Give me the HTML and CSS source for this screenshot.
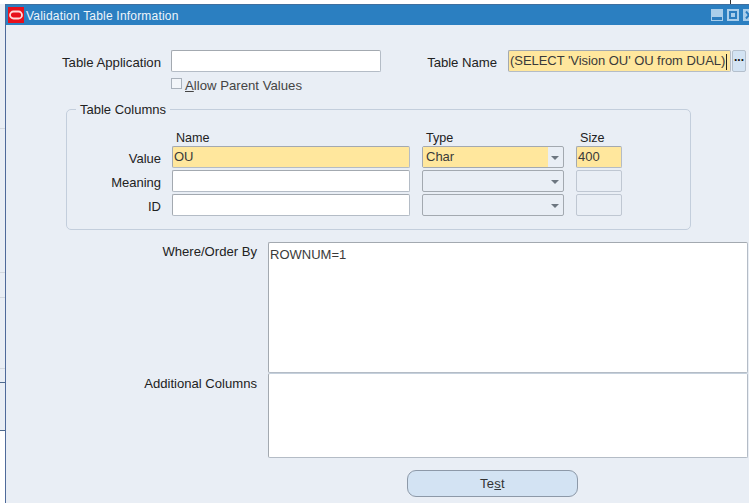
FILE: index.html
```html
<!DOCTYPE html>
<html lang="en">
<head>
  <meta charset="UTF-8">
  <title>Validation Table Information</title>
  <link rel="stylesheet" href="styles.css">
</head>
<body>

  <div class="desktop">
    <div class="desk-line line-1"></div>
    <div class="desk-line line-2"></div>
    <div class="desk-line line-3"></div>
    <div class="desk-line line-4"></div>
    <div class="desk-line line-5"></div>
    <div class="desk-line line-6"></div>
  </div>
  <div class="desk-tick"></div>

  <div class="window">
    <div class="titlebar">
      <svg class="logo" width="16" height="16" viewBox="0 0 16 16">
        <rect width="16" height="16" fill="#e8101c"/>
        <rect x="2" y="4.5" width="12" height="7" rx="3.5" fill="none" stroke="#ffd9d9" stroke-width="1.8"/>
      </svg>
      <span class="title">Validation Table Information</span>
      <div class="win-buttons">
        <span class="win-btn"><i class="min-bar"></i></span>
        <span class="win-btn"><i class="max-box"></i></span>
        <span class="win-btn close-btn">
          <svg width="12" height="12" viewBox="0 0 12 12"><path d="M3 2.5l6 7M9 2.5l-6 7" stroke="#2b7cbf" stroke-width="2"/></svg>
        </span>
      </div>
    </div>

    <div class="content">
      <div class="top-row">
        <label class="lbl app-lbl">Table Application</label>
        <div class="field app-field"></div>
        <label class="lbl name-lbl">Table Name</label>
        <div class="field required name-field">(SELECT 'Vision OU' OU from DUAL)<i class="caret"></i></div>
        <div class="lov-btn">...</div>
      </div>

      <div class="check-row">
        <span class="checkbox"></span>
        <span class="check-lbl"><u>A</u>llow Parent Values</span>
      </div>

      <fieldset class="group">
        <legend>Table Columns</legend>
        <div class="col-grid">
          <span></span>
          <span class="col-head head-name">Name</span>
          <span class="col-head head-type">Type</span>
          <span class="col-head head-size">Size</span>

          <span class="lbl row-lbl">Value</span>
          <div class="field required">OU</div>
          <div class="select required-select"><span class="select-val">Char</span><i class="arrow"></i></div>
          <div class="field required size-val">400</div>

          <span class="lbl row-lbl">Meaning</span>
          <div class="field"></div>
          <div class="select"><span class="select-val"></span><i class="arrow"></i></div>
          <div class="field disabled"></div>

          <span class="lbl row-lbl">ID</span>
          <div class="field"></div>
          <div class="select"><span class="select-val"></span><i class="arrow"></i></div>
          <div class="field disabled"></div>
        </div>
      </fieldset>

      <div class="area-row where-row">
        <label class="lbl area-lbl">Where/Order By</label>
        <div class="area where">ROWNUM=1</div>
      </div>
      <div class="area-row">
        <label class="lbl area-lbl">Additional Columns</label>
        <div class="area additional"></div>
      </div>

      <div class="actions">
        <button class="btn">Te<u>s</u>t</button>
      </div>
    </div>
  </div>

</body>
</html>
```
FILE: styles.css
```css
* {
  box-sizing: border-box;
}

html, body {
  margin: 0;
  height: 503px;
  overflow: hidden;
}

body {
  font-family: "Liberation Sans", Arial, sans-serif;
  font-size: 13px;
  color: #222;
  background: #fff;
  position: relative;
}

/* bits of the window behind the dialog */
.desktop {
  position: absolute;
  left: 0;
  top: 4px;
  width: 6px;
  height: 426px;
  background: #e9eef5;
}

.desk-line {
  position: absolute;
  left: 0;
  width: 6px;
  height: 1px;
  background: #d3d8df;
}

.line-1 { top: 124px; }
.line-2 { top: 268px; }
.line-3 { top: 293px; }
.line-4 { top: 364px; }
.line-5 { top: 378px; background: #4f6a8e; }
.line-6 { top: 426px; background: #4f6a8e; }

.desk-tick {
  position: absolute;
  left: 730px;
  top: 0;
  width: 1px;
  height: 4px;
  background: #333;
}

.window {
  position: absolute;
  left: 5px;
  top: 4px;
  width: 744px;
  height: 499px;
  background: #e9eef5;
  border-left: 1px solid #4f6a9a;
  border-top: 1px solid #3f6f9f;
}

.titlebar {
  height: 20px;
  background: #2b7fc1;
  display: flex;
  align-items: center;
  padding-left: 2px;
}

.logo {
  flex: none;
}

.title {
  margin: 1px 0 0 2px;
  font-size: 12px;
  color: #eef5fb;
  letter-spacing: 0.2px;
}

.win-buttons {
  margin-left: auto;
  display: flex;
  gap: 4px;
  margin-right: -6px;
}

.win-btn {
  width: 12px;
  height: 12px;
  background: #a9cdea;
  position: relative;
  display: block;
}

.min-bar {
  position: absolute;
  left: 1px;
  right: 1px;
  bottom: 1px;
  height: 3px;
  background: #2b7cbf;
}

.max-box {
  position: absolute;
  left: 2px;
  top: 2px;
  width: 8px;
  height: 8px;
  border: 2px solid #2b7cbf;
}

.content {
  position: relative;
  padding: 25px 0 0 0;
}

.lbl {
  font-size: 13.2px;
  color: #222;
  text-align: right;
}

.top-row {
  display: flex;
  align-items: center;
  height: 22px;
}

.app-lbl {
  width: 155px;
  padding-top: 2px;
}

.app-field {
  width: 210px;
  margin-left: 10px;
}

.name-lbl {
  width: 116px;
  padding-top: 2px;
  letter-spacing: -0.05px;
}

.name-field {
  width: 223px;
  margin-left: 11px;
  position: relative;
  letter-spacing: -0.05px;
}

.caret {
  display: inline-block;
  width: 1px;
  height: 16px;
  margin-left: 1px;
  background: #222;
  vertical-align: middle;
}

.field {
  height: 22px;
  background: #fff;
  border: 1px solid #b4bcc6;
  border-top-color: #a3a9b0;
  border-left-color: #a3a9b0;
  border-radius: 2px;
  padding: 0 1px;
  line-height: 20px;
  font-size: 13px;
  color: #3a3a3a;
  white-space: nowrap;
  overflow: hidden;
}

.required {
  background: #ffe79d;
}

.disabled {
  background: #e9eef5;
  border-color: #bfc7d2;
}

.lov-btn {
  width: 14px;
  height: 22px;
  margin-left: 1px;
  background: #d3e3f3;
  border: 1px solid #b4bfcc;
  border-radius: 2px;
  font-weight: bold;
  font-size: 12px;
  line-height: 13px;
  text-align: center;
  color: #111;
  overflow: hidden;
}

.check-row {
  display: flex;
  align-items: center;
  margin: 5px 0 0 165px;
  height: 16px;
}

.checkbox {
  width: 11px;
  height: 11px;
  background: #f2f5f9;
  border: 1px solid #a9b1bb;
  margin-top: -3px;
}

.check-lbl {
  margin-left: 3px;
  font-size: 13.2px;
  color: #444;
}

.group {
  margin: 9px 0 0 60px;
  padding: 0;
  width: 625px;
  height: 128px;
  border: 1px solid #c3cedc;
  border-radius: 5px;
  min-inline-size: 0;
}

.group legend {
  margin-left: 9px;
  padding: 0 4px;
  font-size: 13px;
  color: #222;
  line-height: 15px;
}

.col-grid {
  display: grid;
  grid-template-columns: 84px 238px 142px 46px;
  column-gap: 12px;
  grid-template-rows: 13px 22px 22px 22px;
  row-gap: 2px;
  margin: 14px 0 0 9px;
}

.col-head {
  color: #222;
  line-height: 14px;
  padding-left: 4px;
  font-size: 12.6px;
}

.row-lbl {
  align-self: center;
  margin: 2px -1px 0 0;
  font-size: 13px;
}

.select {
  height: 22px;
  border: 1px solid #a3a9b0;
  border-radius: 2px;
  background: #e9eef5;
  display: flex;
  align-items: stretch;
}

.select-val {
  flex: 1;
  padding-left: 3px;
  line-height: 20px;
  color: #3a3a3a;
}

.required-select .select-val {
  background: #ffe79d;
}

.arrow {
  width: 14px;
  position: relative;
  flex: none;
  margin-right: 1px;
}

.arrow::after {
  content: "";
  position: absolute;
  left: 3px;
  top: 9px;
  border-left: 4px solid transparent;
  border-right: 4px solid transparent;
  border-top: 4px solid #6d7680;
}

.area-row {
  display: flex;
}

.area-lbl {
  width: 251px;
  padding-top: 3px;
  font-size: 13.1px;
}

.area {
  margin-left: 11px;
  width: 480px;
  background: #fff;
  border: 1px solid #b4bcc6;
  border-top-color: #a3a9b0;
  border-left-color: #a3a9b0;
  border-radius: 2px;
  color: #3a3a3a;
  padding: 4px 1px;
  font-size: 13px;
}

.where {
  margin-top: 12px;
  height: 131px;
}

.additional {
  height: 85px;
  border-top-color: #c5d0dc;
}

.where-row .area-lbl {
  padding-top: 14px;
}

.actions {
  margin: 12px 0 0 401px;
}

.btn {
  display: block;
  width: 171px;
  height: 27px;
  background: #d3e3f3;
  border: 1px solid #8d99a8;
  border-radius: 9px;
  font-family: inherit;
  font-size: 13px;
  letter-spacing: 0.3px;
  color: #333;
  padding: 0;
}
```
